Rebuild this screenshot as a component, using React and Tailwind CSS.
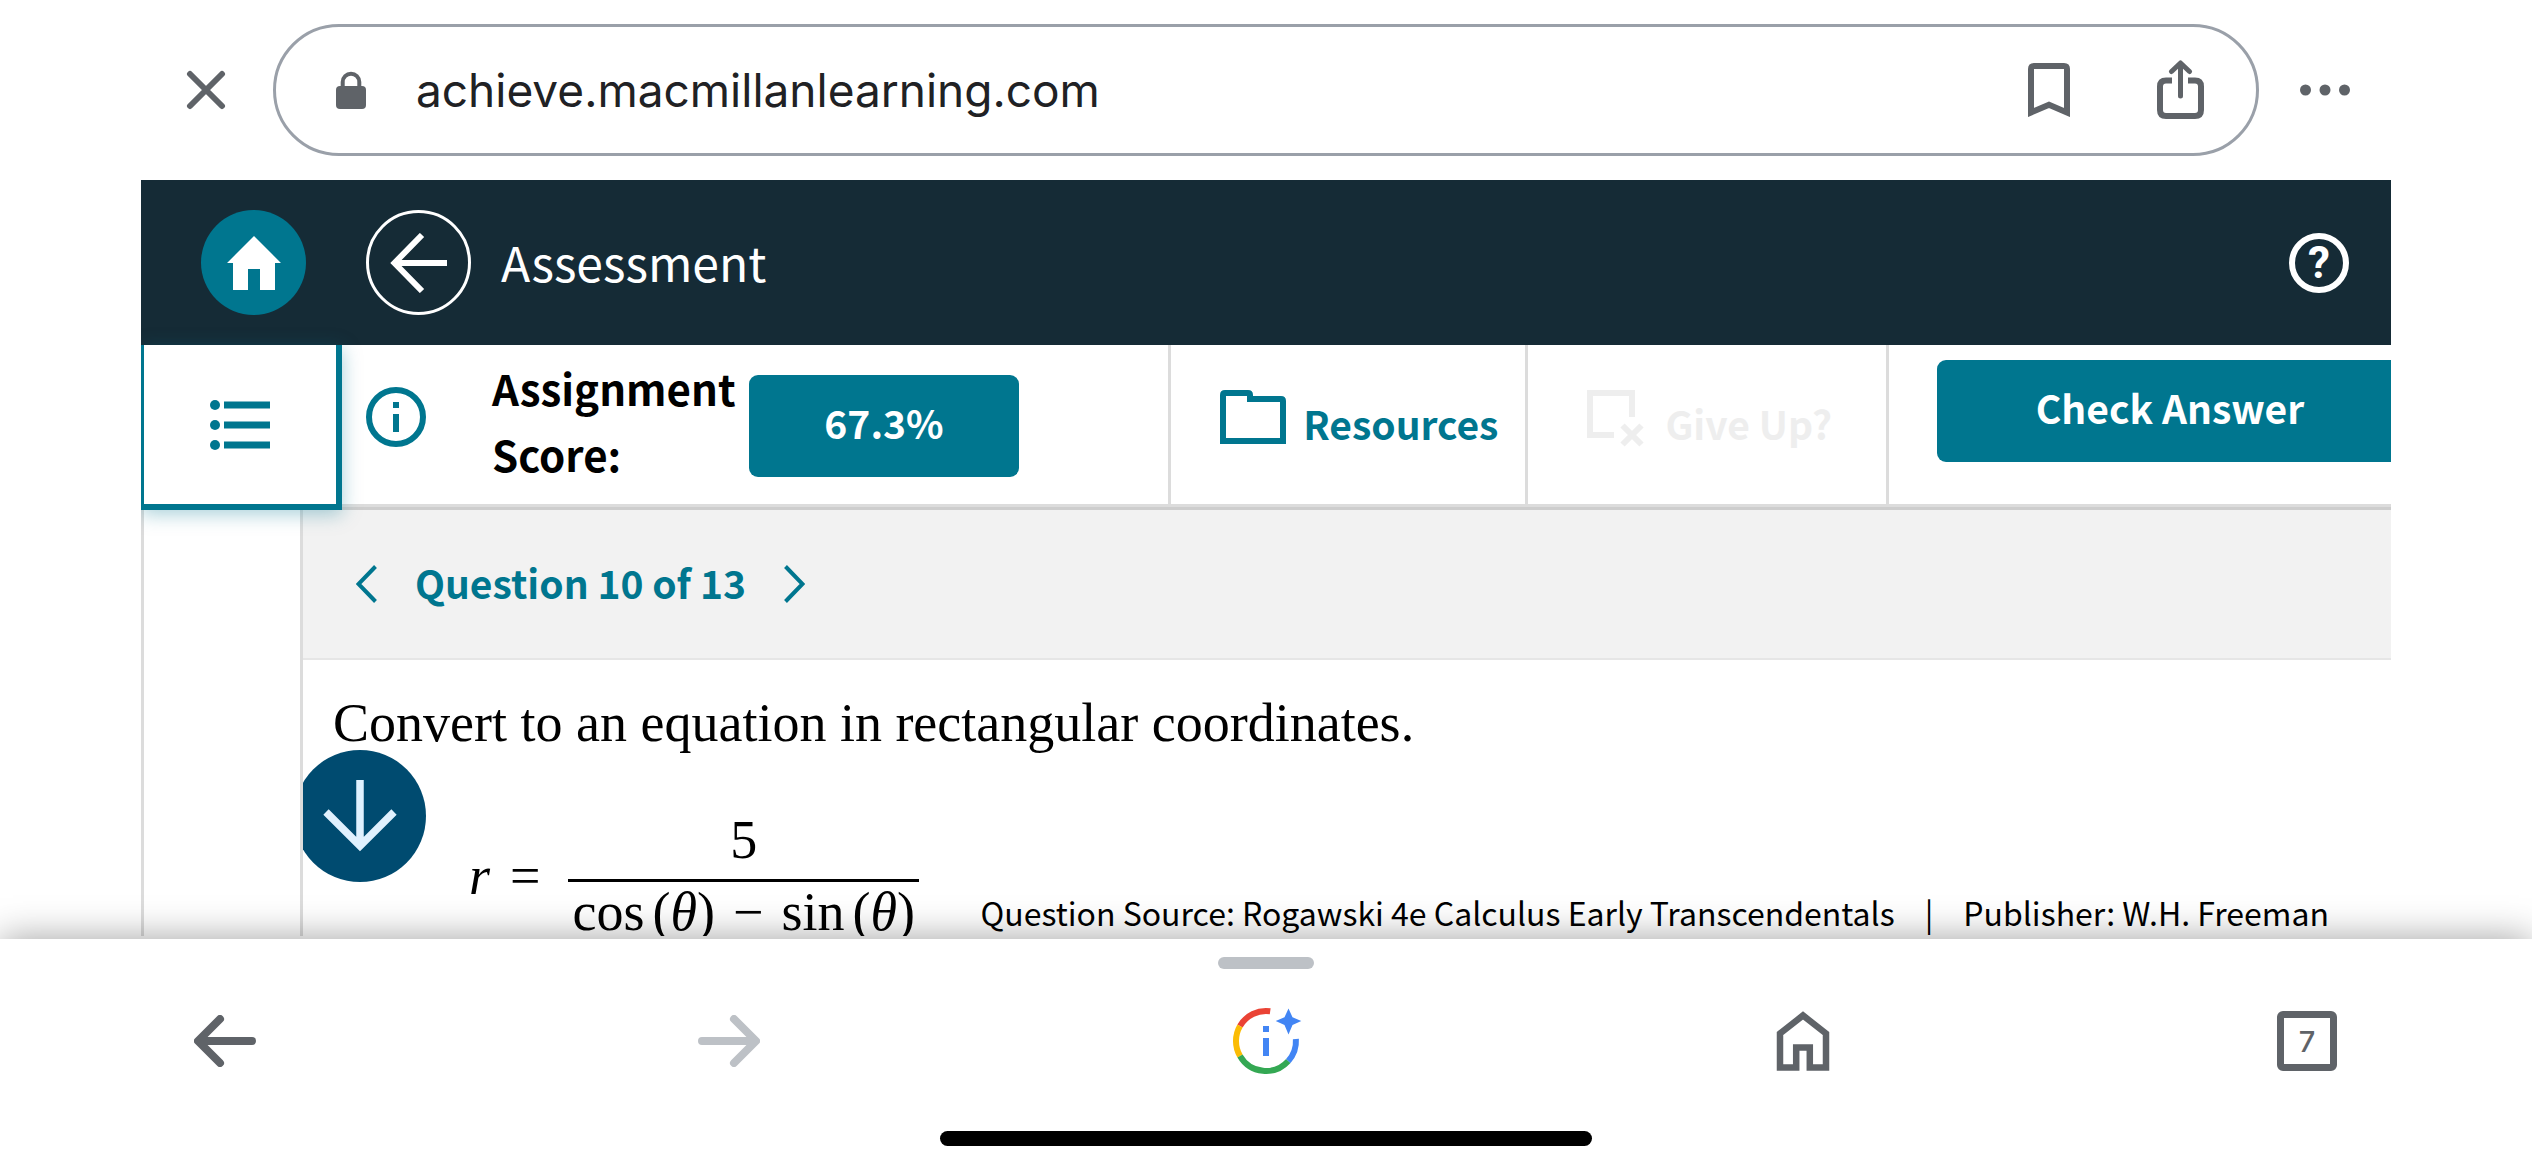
import React from 'react';

function BrowserBar() {
    return (
        <header className="flex items-center h-[180px] pl-[170px] pr-[171px] text-[#5f6368] font-[Inter,sans-serif]">
            <button aria-label="Close" className="flex justify-center items-center w-[72px] h-[72px] shrink-0">
                <svg width="40" height="40" viewBox="0 0 40 40" fill="none" stroke="currentColor" strokeWidth="6" strokeLinecap="round">
                    <path d="M4 4L36 36M36 4L4 36" />
                </svg>
            </button>
            <div className="flex items-center flex-1 h-[132px] ml-[31px] mr-[30px] pl-[60px] pr-[52px] border-[3px] border-[#9aa0a9] rounded-full">
                <svg width="30" height="38" viewBox="0 0 30 38" className="shrink-0">
                    <rect y="15" width="30" height="23" rx="4" fill="currentColor" />
                    <path d="M6.700 17V11A8.300 8.300 0 0 1 23.300 11V17" fill="none" stroke="currentColor" strokeWidth="4" />
                </svg>
                <input
                    type="text"
                    aria-label="Address"
                    defaultValue="achieve.macmillanlearning.com"
                    className="flex-1 min-w-0 ml-[50px] text-[46px] leading-[60px] text-[#202124] bg-transparent outline-none"
                />
                <button aria-label="Bookmark" className="mr-[87px] shrink-0">
                    <svg width="42" height="54" viewBox="0 0 42 54" fill="none" stroke="currentColor" strokeWidth="6">
                        <path d="M6 3H36Q39 3 39 6V49.500L21 41.700L3 49.500V6Q3 3 6 3Z" />
                    </svg>
                </button>
                <button aria-label="Share" className="shrink-0">
                    <svg width="47" height="60" viewBox="0 0 47 60" fill="none" stroke="currentColor" strokeWidth="6">
                        <path d="M15 20.500H9Q3 20.500 3 26.500V50Q3 56 9 56H38Q44 56 44 50V26.500Q44 20.500 38 20.500H31" />
                        <path d="M23.500 36V4M14.500 11.500L23.500 3L32.500 11.500" strokeWidth="5" strokeLinecap="round" strokeLinejoin="round" />
                    </svg>
                </button>
            </div>
            <button aria-label="More" className="flex justify-center items-center w-[72px] h-[72px] shrink-0">
                <svg width="50" height="12" viewBox="0 0 50 12" fill="currentColor">
                    <circle cx="5.500" cy="6" r="5.500" />
                    <circle cx="25" cy="6" r="5.500" />
                    <circle cx="44.500" cy="6" r="5.500" />
                </svg>
            </button>
        </header>
    );
}

function CourseHeader() {
    return (
        <div className="flex items-center h-[165px] pl-[60px] pr-[42px] bg-[#152b36] text-white shrink-0">
            <a href="/home" aria-label="Home" className="flex justify-center items-center w-[105px] h-[105px] rounded-full bg-[#00768f]">
                <svg width="54" height="54" viewBox="0 0 54 54" fill="currentColor">
                    <path d="M27 0L54 27H48V54H33V33H21V54H6V27H0Z" />
                </svg>
            </a>
            <a href="/course" aria-label="Back to course" className="flex justify-center items-center w-[105px] h-[105px] ml-[60px] rounded-full border-[3px] border-white">
                <svg width="57" height="60" viewBox="0 0 57 60" fill="none" stroke="currentColor" strokeWidth="6">
                    <path d="M57 30H5M32 2L4.500 30L32 58" />
                </svg>
            </a>
            <h1 className="ml-[30px] pb-1 text-[48px] leading-[66px]">Assessment</h1>
            <button aria-label="Help" className="flex justify-center items-center w-[60px] h-[60px] ml-auto rounded-full border-[6px] border-white text-[44px] leading-[48px] font-bold font-[Roboto,sans-serif]">
                ?
            </button>
        </div>
    );
}

function Toolbar() {
    return (
        <div className="flex h-[165px] shrink-0 text-[39px] leading-[66px] font-semibold">
            <button aria-label="Question list" className="relative z-10 flex justify-center items-center w-[201px] shrink-0 bg-white text-[#00768f] border-l-[3px] border-r-[6px] border-b-[6px] border-[#00768f] shadow-[0_4px_18px_rgba(0,118,143,0.35)]">
                <svg width="60" height="50" viewBox="0 0 60 50" fill="currentColor">
                    {[5, 25, 45].map((y) => (
                        <g key={y}>
                            <circle cx="5" cy={y} r="5" />
                            <rect x="14" y={y - 3.5} width="46" height="7" />
                        </g>
                    ))}
                </svg>
            </button>
            <div className="flex flex-1 min-w-0 border-b-[3px] border-[#cdcdcd]">
                <div className="flex flex-1 min-w-0 border-b-[3px] border-[#dcdcdc]">
                    <div className="flex items-start flex-1 min-w-0 pl-6 border-r-[3px] border-[#dcdcdc]">
                        <button aria-label="Score information" className="mt-[42px] shrink-0 text-[#00768f]">
                            <svg width="60" height="60" viewBox="0 0 60 60" fill="currentColor">
                                <circle cx="30" cy="30" r="27" fill="none" stroke="currentColor" strokeWidth="6" />
                                <rect x="27" y="15" width="6" height="6" />
                                <rect x="27" y="27" width="6" height="18" />
                            </svg>
                        </button>
                        <p className="w-[257px] ml-[66px] mt-2.5 text-[42px] leading-[66px] text-black shrink-0">Assignment Score:</p>
                        <button className="w-[270px] h-[102px] mt-[30px] pb-2 shrink-0 rounded-[9px] bg-[#00768f] text-white">67.3%</button>
                    </div>
                    <button className="flex items-start pl-[49px] pr-[27px] border-r-[3px] border-[#dcdcdc] text-[#00768f] shrink-0">
                        <svg width="66" height="54" viewBox="0 0 66 54" fill="none" stroke="currentColor" strokeWidth="6" className="mt-[45px]">
                            <path d="M3 51V5Q3 3 5 3H28Q30 3 30 5V9H61Q63 9 63 11V51Z" />
                        </svg>
                        <span className="ml-[17px] mt-[45px]">Resources</span>
                    </button>
                    <button disabled className="flex items-start pl-[59px] pr-[54px] border-r-[3px] border-[#dcdcdc] text-[#eeeeee] shrink-0">
                        <svg width="57" height="57" viewBox="0 0 57 57" fill="none" stroke="currentColor" strokeWidth="6" className="mt-[45px]">
                            <path d="M27 45H3V3H45V27" />
                            <path d="M35.500 35.500L54.500 54.500M54.500 35.500L35.500 54.500" />
                        </svg>
                        <span className="ml-[21px] mt-[45px]">Give Up?</span>
                    </button>
                    <div className="flex items-start pl-12 shrink-0">
                        <button className="w-[466px] h-[102px] mt-[15px] -mr-3 pb-2 rounded-[9px] bg-[#00768f] text-white">Check Answer</button>
                    </div>
                </div>
            </div>
        </div>
    );
}

function Equation() {
    return (
        <div className="flex items-start text-[54px] leading-[60px] text-black whitespace-nowrap">
            <i className="mt-9">r</i>
            <span className="mt-9 mx-5">=</span>
            <div className="ml-2 text-center">
                <div className="pb-[9px]">5</div>
                <div className="flex justify-center px-1 border-t-[3px] border-black">
                    <span>cos</span>
                    <span className="ml-2">(<i>θ</i>)</span>
                    <span className="mx-[18px]">−</span>
                    <span>sin</span>
                    <span className="ml-2">(<i>θ</i>)</span>
                </div>
            </div>
        </div>
    );
}

function Question() {
    return (
        <main className="flex flex-col flex-1 min-w-0">
            <nav className="flex items-center h-[150px] shrink-0 pl-[53px] gap-[38px] bg-[#f2f2f2] border-b-2 border-[#e6e6e6] text-[#00768f]">
                <button aria-label="Previous question">
                    <svg width="21" height="38" viewBox="0 0 21 38" fill="none" stroke="currentColor" strokeWidth="4">
                        <path d="M19.500 1.500L2.500 19L19.500 36.500" />
                    </svg>
                </button>
                <span className="pb-1 text-[39px] leading-[66px] font-semibold">Question 10 of 13</span>
                <button aria-label="Next question">
                    <svg width="21" height="38" viewBox="0 0 21 38" fill="none" stroke="currentColor" strokeWidth="4">
                        <path d="M1.500 1.500L18.500 19L1.500 36.500" />
                    </svg>
                </button>
            </nav>
            <section className="relative flex-1 pt-[30px] pl-[30px] pr-[62px] overflow-hidden font-['Liberation_Serif',serif]">
                <p className="text-[54px] leading-[66px] text-black">Convert to an equation in rectangular coordinates.</p>
                <div className="flex items-end justify-between mt-[54px] pl-[136px]">
                    <Equation />
                    <div className="flex text-[32px] leading-[60px] text-black whitespace-nowrap font-['Noto_Sans_CJK_SC',sans-serif]">
                        <span>Question Source: Rogawski 4e Calculus Early Transcendentals</span>
                        <span className="mx-[30px]">|</span>
                        <span>Publisher: W.H. Freeman</span>
                    </div>
                </div>
                <button aria-label="Scroll down" className="absolute top-[90px] -left-[9px] flex justify-center items-center w-[132px] h-[132px] rounded-full bg-[#004b70] text-[#e0f1fe]">
                    <svg width="74" height="72" viewBox="0 0 74 72" fill="none" stroke="currentColor" strokeWidth="7.500">
                        <path d="M37 0V66M3 32L37 66L71 32" />
                    </svg>
                </button>
            </section>
        </main>
    );
}

function BottomNav() {
    return (
        <footer className="relative z-20 flex flex-col items-center h-[231px] shrink-0 pt-[18px] bg-white text-[#5f6368] shadow-[0_0_36px_rgba(0,0,0,0.38)]">
            <div className="w-24 h-3 rounded-full bg-[#bdc1c6]" />
            <nav className="flex justify-between items-center self-stretch h-[72px] mt-9 px-[189px]">
                <button aria-label="Back" className="flex justify-center w-[72px]">
                    <svg width="62" height="52" viewBox="0 0 62 52" fill="none" stroke="currentColor" strokeWidth="8" strokeLinecap="round" strokeLinejoin="round">
                        <path d="M58 26H5M26 4L4 26L26 48" />
                    </svg>
                </button>
                <button aria-label="Forward" disabled className="flex justify-center w-[72px] text-[#bdc1c6]">
                    <svg width="62" height="52" viewBox="0 0 62 52" fill="none" stroke="currentColor" strokeWidth="8" strokeLinecap="round" strokeLinejoin="round">
                        <path d="M4 26H57M36 4L58 26L36 48" />
                    </svg>
                </button>
                <button aria-label="Page info" className="flex justify-center w-[138px]">
                    <svg width="72" height="72" viewBox="0 0 72 72" fill="none" strokeWidth="6">
                        <path d="M40.200 6.300A30 30 0 0 0 10 21" stroke="#ea4335" />
                        <path d="M10 21A30 30 0 0 0 10 51" stroke="#fbbc05" />
                        <path d="M10 51A30 30 0 0 0 58.300 56" stroke="#34a853" />
                        <path d="M58.300 56A30 30 0 0 0 65.900 34" stroke="#4285f4" />
                        <path d="M58.500 3.500L62.500 12.300L71.300 16L62.500 20L58.500 29.500L54.500 20L45.700 16L54.500 12.300Z" fill="#4285f4" />
                        <path d="M33 21H39V27H33ZM33 33H39V51H33Z" fill="#4285f4" />
                    </svg>
                </button>
                <button aria-label="Home page" className="flex justify-center w-[72px]">
                    <svg width="72" height="72" viewBox="0 0 72 72" fill="none" stroke="currentColor" strokeWidth="6.500">
                        <path d="M13 28.500L36 10.500L59 28.500V62.500H42.800V42.500H29.200V62.500H13Z" />
                    </svg>
                </button>
                <button aria-label="Open tabs" className="flex justify-center w-[72px]">
                    <span className="flex justify-center items-center w-[60px] h-[60px] border-[7px] border-current rounded-md text-[29px] leading-none font-medium font-[Inter,sans-serif]">7</span>
                </button>
            </nav>
            <div className="w-[652px] h-[15px] mt-auto mb-6 rounded-full bg-black" />
        </footer>
    );
}

function App() {
    return (
        <div className="flex flex-col h-screen overflow-hidden bg-white font-['Noto_Sans_CJK_SC',sans-serif]">
            <BrowserBar />
            <div className="flex flex-col flex-1 min-h-0 mx-[141px] mb-[3px] overflow-hidden">
                <CourseHeader />
                <Toolbar />
                <div className="flex flex-1 min-h-0">
                    <aside className="w-[162px] shrink-0 border-x-[3px] border-[#dcdcdc]" />
                    <Question />
                </div>
            </div>
            <BottomNav />
        </div>
    );
}

export default App;
